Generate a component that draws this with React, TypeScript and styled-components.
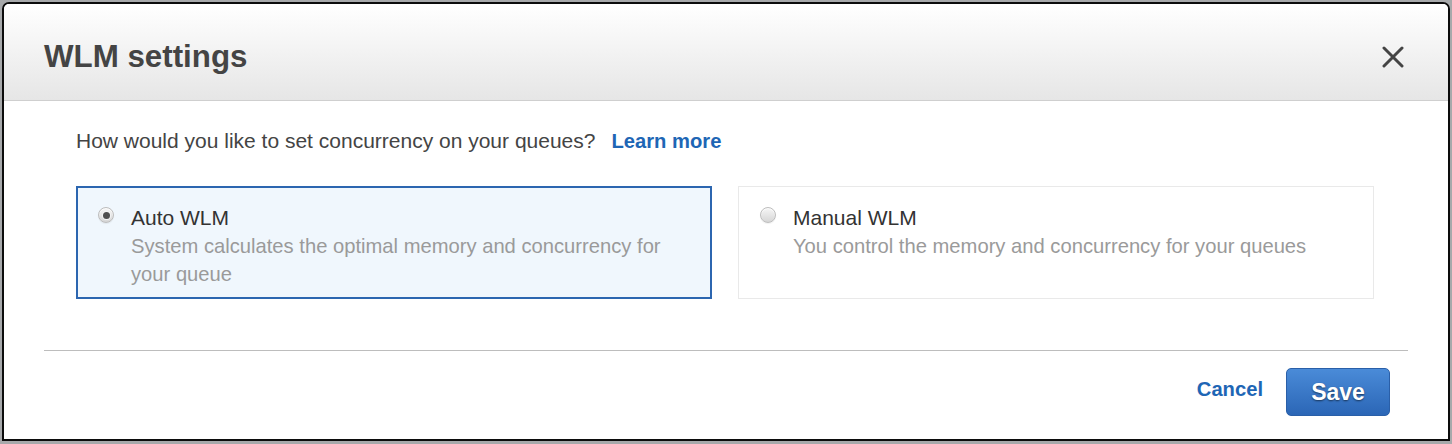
import React from "react";
import styled, { createGlobalStyle } from "styled-components";

const Global = createGlobalStyle`
  html, body { margin: 0; padding: 0; background: #a7a9ab; }
  body { font-family: "Liberation Sans", Arial, Helvetica, sans-serif; }
  #root { padding: 2px; }
`;

const Dialog = styled.div`
  width: 1448px;
  height: 439px;
  box-sizing: border-box;
  border: 2px solid #0c0c0c;
  border-radius: 7px 7px 0 0;
  background: #fff;
  display: flex;
  flex-direction: column;
  overflow: hidden;
`;

const Header = styled.div`
  height: 97px;
  box-sizing: border-box;
  flex: none;
  display: flex;
  align-items: center;
  justify-content: space-between;
  padding: 9px 43px 0 40px;
  background: linear-gradient(#ffffff, #e6e6e6);
  border-bottom: 1px solid #cfcfcf;
`;

const Title = styled.h1`
  margin: 0;
  font-size: 31.3px;
  font-weight: 700;
  color: #444;
`;

const CloseButton = styled.button`
  border: 0;
  background: none;
  padding: 0;
  width: 24px;
  height: 24px;
  display: flex;
  align-items: center;
  justify-content: center;
  cursor: pointer;
`;

const Body = styled.div`
  flex: 1;
  padding: 0 40px;
  display: flex;
  flex-direction: column;
`;

const Question = styled.p`
  margin: 26px 0 0 32px;
  font-size: 21px;
  line-height: 28px;
  color: #444;
`;

const Link = styled.a`
  color: #1e66b5;
  font-size: 20.2px;
  font-weight: 700;
  text-decoration: none;
  margin-left: 16px;
`;

const Options = styled.div`
  display: grid;
  grid-template-columns: 636px 636px;
  column-gap: 26px;
  margin: 31px 0 0 32px;
`;

const Card = styled.label<{ $selected?: boolean }>`
  display: flex;
  align-items: flex-start;
  gap: 17px;
  box-sizing: border-box;
  padding: ${(p) => (p.$selected ? "16px 20px 9px 20px" : "17px 21px 10px 21px")};
  border: ${(p) => (p.$selected ? "2px solid #2c66b0" : "1px solid #e9e9e9")};
  background: ${(p) => (p.$selected ? "#f0f7fd" : "#fff")};
  cursor: pointer;
`;

const Radio = styled.span<{ $checked?: boolean }>`
  flex: none;
  width: 16px;
  height: 16px;
  margin-top: 3px;
  box-sizing: border-box;
  border-radius: 50%;
  border: 1px solid #bdbdbd;
  background: linear-gradient(#f6f6f6, #d6d6d6);
  display: flex;
  align-items: center;
  justify-content: center;
  box-shadow: inset 0 1px 1px rgba(255, 255, 255, 0.8), 0 1px 1px rgba(0, 0, 0, 0.06);
  &::after {
    content: "";
    display: ${(p) => (p.$checked ? "block" : "none")};
    width: 7px;
    height: 7px;
    border-radius: 50%;
    background: #4f4f4f;
    box-shadow: 0 0 0 1px #f4f4f4;
  }
`;

const OptionText = styled.div`
  display: flex;
  flex-direction: column;
  line-height: 28px;
`;

const OptionTitle = styled.span`
  font-size: 21px;
  color: #333;
`;

const OptionDesc = styled.span`
  font-size: 20.2px;
  color: #9a9a9a;
`;

const Divider = styled.hr`
  margin: 51px 0 0 0;
  border: 0;
  border-top: 1px solid #bdbdbd;
  height: 0;
`;

const Footer = styled.div`
  display: flex;
  justify-content: flex-end;
  align-items: center;
  gap: 23px;
  padding: 17px 18px 0 0;
`;

const TextButton = styled.button`
  border: 0;
  background: none;
  padding: 0;
  margin-bottom: 5px;
  font-family: inherit;
  font-size: 20.2px;
  font-weight: 700;
  color: #1e66b5;
  cursor: pointer;
`;

const PrimaryButton = styled.button`
  width: 104px;
  height: 48px;
  border: 1px solid #2a5fa8;
  border-radius: 5px;
  background: linear-gradient(#4a8bd8, #2b66b6);
  color: #fff;
  font-family: inherit;
  font-size: 23px;
  font-weight: 700;
  text-shadow: 0 1px 2px rgba(0, 0, 0, 0.55);
  cursor: pointer;
`;

export default function App() {
  return (
    <>
      <Global />
      <Dialog>
        <Header>
          <Title>WLM settings</Title>
          <CloseButton aria-label="Close">
            <svg width="22" height="22" viewBox="0 0 22 22">
              <path d="M2 2 L20 20 M20 2 L2 20" stroke="#444" strokeWidth="3" strokeLinecap="round" />
            </svg>
          </CloseButton>
        </Header>
        <Body>
          <Question>
            How would you like to set concurrency on your queues?
            <Link href="#">Learn more</Link>
          </Question>
          <Options>
            <Card $selected>
              <Radio $checked />
              <OptionText>
                <OptionTitle>Auto WLM</OptionTitle>
                <OptionDesc>System calculates the optimal memory and concurrency for your queue</OptionDesc>
              </OptionText>
            </Card>
            <Card>
              <Radio />
              <OptionText>
                <OptionTitle>Manual WLM</OptionTitle>
                <OptionDesc>You control the memory and concurrency for your queues</OptionDesc>
              </OptionText>
            </Card>
          </Options>
          <Divider />
          <Footer>
            <TextButton>Cancel</TextButton>
            <PrimaryButton>Save</PrimaryButton>
          </Footer>
        </Body>
      </Dialog>
    </>
  );
}
